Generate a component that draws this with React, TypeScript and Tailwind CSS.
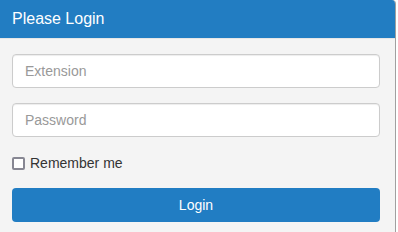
import React from "react";

export default function App() {
  return (
    <div className="w-[398px] h-[232px] bg-white overflow-hidden" style={{ fontFamily: '"Liberation Sans", Arial, sans-serif' }}>
      <div className="w-[396px] h-full bg-[#f4f4f4] border-r border-[#a0a0a0] rounded-tr-[4px] overflow-hidden">
        <div className="h-[39px] bg-[#227dc2] border-b border-[#e6e6e6] text-white text-[16px] pl-3 flex items-center">
          Please Login
        </div>
        <div className="px-3 pt-[15px] flex flex-col">
          <input
            type="text"
            placeholder="Extension"
            className="h-[34px] w-[368px] px-3 text-[14px] bg-white border border-[#cccccc] rounded-[4px] text-[#555] placeholder:text-[#999] outline-none shadow-[inset_0_1px_1px_rgba(0,0,0,0.075)]"
          />
          <input
            type="password"
            placeholder="Password"
            className="mt-[15px] h-[34px] w-[368px] px-3 text-[14px] bg-white border border-[#cccccc] rounded-[4px] text-[#555] placeholder:text-[#999] outline-none shadow-[inset_0_1px_1px_rgba(0,0,0,0.075)]"
          />
          <label className="mt-4 h-5 flex items-center text-[14px] text-[#333] leading-5">
            <input
              type="checkbox"
              className="appearance-none m-0 w-[13px] h-[13px] mr-[5px] bg-white border-2 border-[#878793] rounded-[2px]"
            />
            Remember me
          </label>
          <button className="mt-[15px] h-[34px] w-[368px] bg-[#217dc3] text-white text-[14px] rounded-[4px]">
            Login
          </button>
        </div>
      </div>
    </div>
  );
}
